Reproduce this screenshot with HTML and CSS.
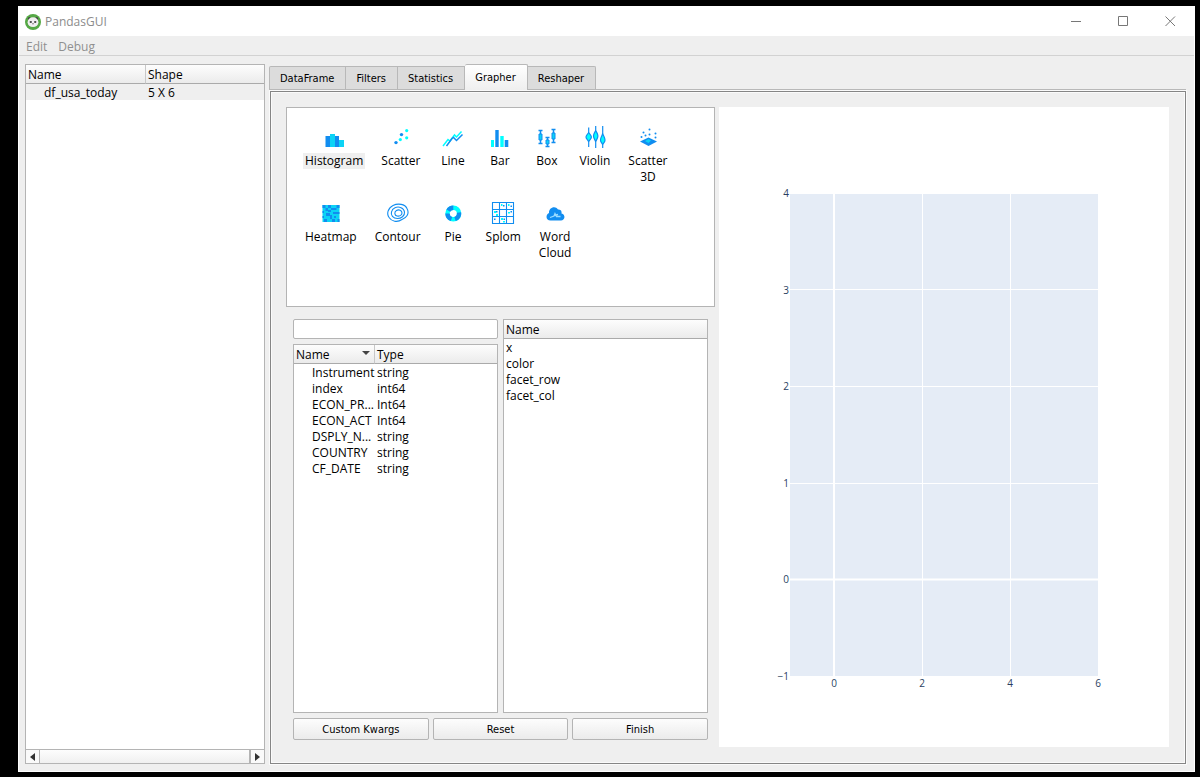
FILE: index.html
```
<!DOCTYPE html>
<html lang="en">
<head>
<meta charset="utf-8">
<title>PandasGUI</title>
<link rel="stylesheet" href="styles.css">
</head>
<body>
<div class="window">
  <header class="titlebar">
    <svg class="logo" viewBox="0 0 16 16" aria-hidden="true">
      <circle cx="8" cy="8" r="8" fill="#55a845"/>
      <circle cx="4.3" cy="4.6" r="1.5" fill="#444"/><circle cx="11.7" cy="4.6" r="1.5" fill="#444"/>
      <ellipse cx="8" cy="8.2" rx="5.4" ry="4.9" fill="#f1eef1"/>
      <ellipse cx="5.8" cy="7.9" rx="1.2" ry="1" fill="#444"/><ellipse cx="10.2" cy="7.9" rx="1.2" ry="1" fill="#444"/>
      <ellipse cx="8" cy="9.8" rx=".8" ry=".5" fill="#444"/>
    </svg>
    <span class="app-name">PandasGUI</span>
    <div class="controls">
      <button class="control" aria-label="Minimize"><svg viewBox="0 0 11 11"><path d="M0 5.5H10"/></svg></button>
      <button class="control" aria-label="Maximize"><svg viewBox="0 0 11 11"><path d="M.5 .5H9.5V9.5H.5Z"/></svg></button>
      <button class="control" aria-label="Close"><svg viewBox="0 0 11 11"><path d="M.5 .5L10 10M10 .5L.5 10"/></svg></button>
    </div>
  </header>
  <nav class="menubar">
    <button class="menu">Edit</button>
    <button class="menu">Debug</button>
  </nav>
  <main class="content">
    <section class="frames box">
      <table class="grid">
        <colgroup><col class="half"><col></colgroup>
        <thead><tr><th>Name</th><th>Shape</th></tr></thead>
        <tbody><tr class="current"><td class="indent">df_usa_today</td><td>5 X 6</td></tr></tbody>
      </table>
      <div class="scrollbar">
        <button class="scroll-btn" aria-label="Scroll left"><svg viewBox="0 0 5 8"><path d="M5 0V8L0 4Z"/></svg></button>
        <div class="scroll-thumb"></div>
        <button class="scroll-btn" aria-label="Scroll right"><svg viewBox="0 0 5 8"><path d="M0 0V8L5 4Z"/></svg></button>
      </div>
    </section>
    <section class="workspace">
      <div class="tabs" role="tablist">
        <button class="tab" role="tab">DataFrame</button>
        <button class="tab" role="tab">Filters</button>
        <button class="tab" role="tab">Statistics</button>
        <button class="tab active" role="tab" aria-selected="true">Grapher</button>
        <button class="tab" role="tab">Reshaper</button>
      </div>
      <div class="pane">
        <div class="setup">
          <div class="charts box">
            <div class="chart-row">
              <button class="chart selected"><svg class="icon" viewBox="0 0 24 24"><path class="b" d="M3.5 11H8V22H3.5ZM13 11H17V22H13Z"/><path class="c2" d="M8 9H13V22H8ZM17 15H22V22H17Z"/></svg><span>Histogram</span></button>
              <button class="chart"><svg class="icon" viewBox="0 0 24 24"><g class="b"><circle cx="7" cy="17.6" r="1.7"/><circle cx="12.5" cy="9.6" r="1.7"/></g><g class="c"><circle cx="11.3" cy="14.6" r="1.6"/><circle cx="17.7" cy="5.6" r="1.6"/><circle cx="17.7" cy="12.8" r="1.6"/></g></svg><span>Scatter</span></button>
              <button class="chart"><svg class="icon" viewBox="0 0 24 24"><path class="cl" d="M2 21L7 14.5L9 16L13.5 10L15.5 12L20.5 6.5"/><path class="bl" d="M5.5 21L11 13.5L12.5 12.5L15.5 15.5L21.5 9.5"/></svg><span>Line</span></button>
              <button class="chart"><svg class="icon" viewBox="0 0 24 24"><path class="c" d="M3 15H6V22H3ZM12.3 11H15.7V22H12.3Z"/><path class="b" d="M7.3 5H10.7V22H7.3ZM16.7 15H20.3V22H16.7Z"/></svg><span>Bar</span></button>
              <button class="chart"><svg class="icon" viewBox="0 0 24 24"><path class="bl" d="M3.5 5.5H7.5M3.5 18.5H7.5M5.5 5.5V18.5M10.5 12.5H14.5M10.5 21.5H14.5M12.5 12.5V21.5M16.5 4.5H20.5M16.5 17.5H20.5M18.5 4.5V17.5"/><path class="box-body" d="M4 9H7V15H4ZM11 15H14V19H11ZM17 8H20V14H17Z"/></svg><span>Box</span></button>
              <button class="chart"><svg class="icon" viewBox="0 0 24 24"><path class="violin" d="M5.7 2.5V7C5.3 9 3 10 3 12S5.3 15 5.7 17V22V17C6.1 15 8.4 14 8.4 12S6.1 9 5.7 7ZM12.7 1V5C12.3 7 10.5 8.5 10.5 11S12.3 15 12.7 17V23V17C13.1 15 14.9 13.5 14.9 11S13.1 7 12.7 5ZM19.7 1V8C19.3 11 17.5 12.5 17.5 15S19.3 18 19.7 20V23V20C20.1 18 22 17.5 22 15S20.1 11 19.7 8Z"/></svg><span>Violin</span></button>
              <button class="chart"><svg class="icon" viewBox="0 0 24 24"><path class="b" d="M4 16.5L12.5 12.5L21 16.5L12.5 21Z"/><path class="c2" d="M9 16L12.5 14L15 15.5L12.5 18Z"/><g class="b"><circle cx="5.5" cy="12" r="1"/><circle cx="7.5" cy="7.5" r="1"/><circle cx="9.5" cy="10.5" r="1"/><circle cx="13.5" cy="4.5" r="1"/><circle cx="13.5" cy="9.5" r="1"/><circle cx="19.5" cy="8.5" r="1"/><circle cx="19.5" cy="12.5" r="1"/></g></svg><span>Scatter<br>3D</span></button>
            </div>
            <div class="chart-row">
              <button class="chart"><svg class="icon" viewBox="0 0 24 24"><path class="c2" d="M3.5 4H20.5V21H3.5Z"/><path class="b" d="M3.5 4H6.5V7H3.5ZM9 4H12V7H9ZM17.5 4H20.5V7H17.5ZM6.5 7H9V10H6.5ZM12 7H17.5V9H12ZM9 9H12V11H9ZM14 11H20.5V13H14ZM3.5 10H5V12H3.5ZM7 12H11V15H7ZM11 14H13V18H11ZM3.5 15H5V17H3.5ZM15 15H17V17H15ZM5 18H8V21H5ZM13 18H16V21H13ZM18.5 18H20.5V21H18.5Z"/></svg><span>Heatmap</span></button>
              <button class="chart"><svg class="icon" viewBox="0 0 24 24"><g class="bl thin"><path d="M7 4.5C12 2 19 3 21 7.5C24 13 20 17 16 18.5C11 22 5.5 20 3.5 17C0 13 2 7 7 4.5Z"/><path d="M9 6.7C13 5 18 7 18.5 11C19 15 15 17.5 11.5 17.5C7 17.5 4.5 14 5.5 11C6 8.5 7 7.5 9 6.7Z"/><path d="M10.5 9.5C13 8 16 9.5 16 12S13 15.5 11 15C8.5 14.5 8 11 10.5 9.5Z"/></g></svg><span>Contour</span></button>
              <button class="chart"><svg class="icon" viewBox="0 0 24 24"><circle class="ring-c" cx="12.3" cy="12.5" r="5.8"/><path class="ring-b" d="M7.3 9.6A5.8 5.8 0 0 1 12.3 6.7M18 11.5A5.8 5.8 0 0 1 14 18M10.5 18A5.8 5.8 0 0 1 6.5 12.5"/></svg><span>Pie</span></button>
              <button class="chart"><svg class="icon" viewBox="0 0 24 24"><path class="bl thin" d="M1.5 1.5H22.5V22.5H1.5ZM8.5 1.5V22.5M15.5 1.5V22.5M1.5 8.5H22.5M1.5 15.5H22.5"/><path class="c" d="M3 10H5V12H3ZM5 13H7V15H5ZM10 17H12V19H10ZM12 20H14V21.5H12ZM17 3H18.5V5H17ZM17 11H19V12.5H17ZM10 3H11.5V5H10Z"/><path class="b" d="M5 10H6.5V11.5H5ZM3 17.5H4.5V19H3ZM12 4H13.5V5.5H12ZM19.5 4.5H21V6H19.5ZM19.5 10H21V11.5H19.5ZM12.5 17.5H14V19H12.5Z"/></svg><span>Splom</span></button>
              <button class="chart"><svg class="icon" viewBox="0 0 24 24"><path class="b" d="M7.5 19.5C2.5 19.5 2.5 13.5 6 12C5.5 7 12 4 15 8.5C18 8 19 10.5 18.5 12.5C23 13.5 22 19.5 18 19.5Z"/><path class="cloud-mark" d="M7 16.5L11 15L12 12.5L13.5 15.5L17.5 15.5M11 14.5L15 13.5"/></svg><span>Word<br>Cloud</span></button>
            </div>
          </div>
          <div class="mapping">
            <div class="columns">
              <div class="source">
                <input class="search" type="text" aria-label="Filter columns">
                <div class="box list">
                  <table class="grid">
                    <colgroup><col class="name-col"><col></colgroup>
                    <thead><tr><th>Name<svg class="sort" viewBox="0 0 8 4"><path d="M0 0H8L4 4Z"/></svg></th><th>Type</th></tr></thead>
                    <tbody>
                      <tr><td class="indent">Instrument</td><td>string</td></tr>
                      <tr><td class="indent">index</td><td>int64</td></tr>
                      <tr><td class="indent">ECON_PR...</td><td>Int64</td></tr>
                      <tr><td class="indent">ECON_ACT</td><td>Int64</td></tr>
                      <tr><td class="indent">DSPLY_N...</td><td>string</td></tr>
                      <tr><td class="indent">COUNTRY</td><td>string</td></tr>
                      <tr><td class="indent">CF_DATE</td><td>string</td></tr>
                    </tbody>
                  </table>
                </div>
              </div>
              <div class="box list">
                <table class="grid">
                  <thead><tr><th>Name</th></tr></thead>
                  <tbody><tr><td>x</td></tr><tr><td>color</td></tr><tr><td>facet_row</td></tr><tr><td>facet_col</td></tr></tbody>
                </table>
              </div>
            </div>
            <div class="actions">
              <button class="action">Custom Kwargs</button>
              <button class="action">Reset</button>
              <button class="action">Finish</button>
            </div>
          </div>
        </div>
        <div class="plot">
          <svg class="figure" viewBox="0 0 450 640" role="img" aria-label="Empty plot">
            <path class="plot-bg" d="M71 86H380V569H71Z"/>
            <path class="gridline" d="M203.5 86V569M291.5 86V569M379.5 86V569M71 86.5H380M71 182.5H380M71 279.5H380M71 376.5H380"/>
            <path class="zeroline" d="M115 86V569M71 472.5H380"/>
            <g class="tick y"><text x="70" y="90">4</text><text x="70" y="187">3</text><text x="70" y="283">2</text><text x="70" y="380">1</text><text x="70" y="476">0</text><text x="70" y="573">−1</text></g>
            <g class="tick x"><text x="115" y="580">0</text><text x="203" y="580">2</text><text x="291" y="580">4</text><text x="379" y="580">6</text></g>
          </svg>
        </div>
      </div>
    </section>
  </main>
</div>
</body>
</html>
```
FILE: styles.css
```
* { box-sizing: border-box; }
body {
  margin: 0;
  height: 100vh;
  padding: 6px 5px 5px 18px;
  background: #000;
  color: #000;
  font: 12px/16px "Open Sans", "Noto Sans", sans-serif;
}
button { font: inherit; color: inherit; margin: 0; padding: 0; border: 0; background: none; }
svg { display: block; }

.window { height: 100%; display: flex; flex-direction: column; background: #efefef; border: 1px solid #fff; }

.titlebar { flex: none; height: 29px; display: flex; align-items: center; background: #fff; padding-left: 6px; color: #8c8c8c; }
.logo { width: 16px; height: 16px; }
.app-name { margin-left: 4px; }
.controls { margin-left: auto; display: flex; }
.control { width: 47px; height: 28px; display: grid; place-items: center; }
.control svg { width: 11px; height: 11px; fill: none; stroke: #777; }

.menubar { flex: none; height: 20px; display: flex; gap: 11px; padding: 2px 0 0 7px; border-bottom: 1px solid #d2d2d2; color: #8f8f8f; }

.content { flex: 1; min-height: 0; display: flex; gap: 4px; padding: 8px 8px 7px 6px; }
.box { background: #fff; border: 1px solid #b4b4b4; }

.frames { flex: 0 0 240px; display: flex; flex-direction: column; }
.grid { width: 100%; table-layout: fixed; border-collapse: separate; border-spacing: 0; }
.grid th {
  height: 19px; padding: 2px 2px 0; text-align: left; font-weight: 400; line-height: 16px;
  background: linear-gradient(#fdfdfd, #ebebeb);
  border-bottom: 1px solid #aaa;
}
.grid th + th { border-left: 1px solid #c8c8c8; }
.grid td { height: 16px; padding: 2px 2px 0; line-height: 14px; white-space: nowrap; }
.grid td + td { padding-left: 3px; }
.grid .indent { padding-left: 18px; padding-right: 0; }
.half { width: 50%; }
.name-col { width: 80px; }
.current { background: #efefef; }
.sort { float: right; width: 8px; height: 4px; margin: 4px 2px 0 0; fill: #444; }

.scrollbar { margin-top: auto; height: 14px; display: flex; border-top: 1px solid #b4b4b4; background: #fafafa; }
.scroll-btn { width: 13px; display: grid; place-items: center; }
.scroll-btn svg { width: 5px; height: 8px; fill: #333; }
.scroll-thumb { flex: 1; border: solid #b4b4b4; border-width: 0 2px 0 1px; background: linear-gradient(#fdfdfd, #f0f0f0); }

.workspace { flex: 1; min-width: 0; display: flex; flex-direction: column; }
.tabs { flex: none; height: 26px; display: flex; align-items: flex-end; border-bottom: 1px solid #b8b8b8; }
.tab, .action { font-family: "DejaVu Sans Condensed", "DejaVu Sans", sans-serif; font-size: 11px; padding-top: 2px; }
.tab {
  height: 23px; padding-left: 10px; padding-right: 11px;
  background: #dcdcdc; border: 1px solid #b8b8b8; border-left-width: 0; border-bottom: 0;
}
.tab:first-child { border-left-width: 1px; border-radius: 2px 0 0 0; }
.tab:last-child { border-radius: 0 2px 0 0; }
.tab.active { height: 26px; margin-bottom: -1px; padding-bottom: 2px; background: linear-gradient(#fff, #efefef); border-radius: 2px 2px 0 0; }

.pane {
  flex: 1; min-height: 0; display: flex; gap: 4px; margin: 1px 0 0 1px; padding: 15px 16px 16px 15px;
  border: 1px solid #858585; outline: 1px solid #fafafa; box-shadow: inset 0 0 0 1px #fafafa;
}
.setup { flex: 0 0 429px; display: flex; flex-direction: column; }
.charts { height: 200px; padding: 17px 16px; display: flex; flex-direction: column; gap: 16px; }
.chart-row { display: flex; align-items: flex-start; gap: 14px; }
.chart { min-width: 33px; display: flex; flex-direction: column; align-items: center; gap: 4px; }
.chart span { padding: 0 2px; }
.chart.selected span { background: #efefef; }
.icon { width: 24px; height: 24px; }
.b { fill: #118df0; }
.c { fill: #0ff; }
.c2 { fill: #0cd3f5; }
.bl, .cl { fill: none; stroke: #118df0; stroke-width: 1.5; }
.cl { stroke: #0ff; }
.thin { stroke-width: 1.1; }
.box-body { fill: #0cd3f5; stroke: #118df0; }
.violin { fill: #0ff; stroke: #118df0; stroke-width: 1.2; }
.ring-c, .ring-b { fill: none; stroke: #0ff; stroke-width: 4.4; }
.ring-b { stroke: #118df0; }
.cloud-mark { fill: none; stroke: #9adcff; stroke-width: 1.3; }

.mapping { flex: 1; min-height: 0; display: flex; flex-direction: column; gap: 5px; padding: 12px 7px 7px; }
.columns { flex: 1; min-height: 0; display: grid; grid-template-columns: 1fr 1fr; gap: 5px; }
.source { display: flex; flex-direction: column; gap: 5px; }
.list { flex: 1; }
.search { height: 20px; width: 100%; padding: 0 4px; font: inherit; background: #fff; border: 1px solid #b4b4b4; border-radius: 2px; }
.actions { display: grid; grid-template-columns: 1fr 1fr 1fr; gap: 4px; }
.action { height: 22px; background: linear-gradient(#fdfdfd, #ebebeb); border: 1px solid #b4b4b4; border-radius: 2px; }

.plot { flex: 1; min-width: 0; background: #fff; }
.figure { width: 100%; height: 100%; }
.plot-bg { fill: #e5ecf6; }
.gridline { stroke: #fff; stroke-width: 1; }
.zeroline { stroke: #fff; stroke-width: 2; }
.tick { fill: #2a3f5f; font: 10px "Open Sans", sans-serif; }
.tick.y { text-anchor: end; }
.tick.x { text-anchor: middle; }
```
